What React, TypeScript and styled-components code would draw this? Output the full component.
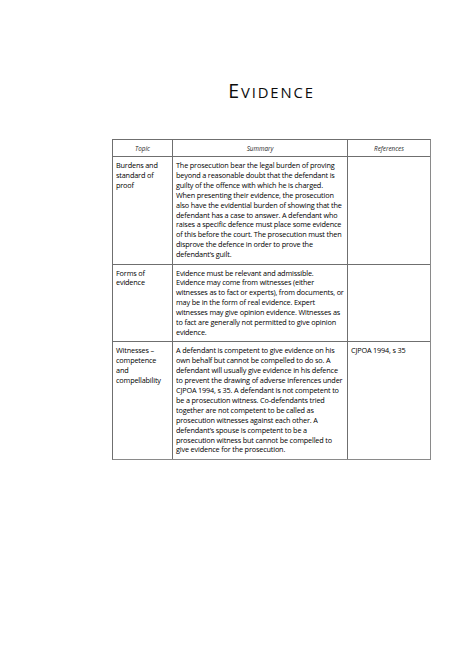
import styled, { createGlobalStyle } from "styled-components";

const GlobalStyle = createGlobalStyle`
  html, body {
    margin: 0;
    padding: 0;
    background: #ffffff;
  }
  body {
    font-family: "Open Sans", "Noto Sans", sans-serif;
    color: #1e1e1e;
  }
`

const Page = styled.div`
  width: 474px;
  height: 670px;
  padding-left: 112px;
  box-sizing: border-box;
`

const Content = styled.div`
  width: 319px;
`

const Title = styled.h1`
  margin: 0;
  padding-top: 79px;
  height: 139px;
  box-sizing: border-box;
  text-align: center;
  font-family: "Open Sans", "Noto Sans", sans-serif;
  font-weight: 400;
  font-size: 19.5px;
  line-height: 24px;
  letter-spacing: 1.9px;
  color: #0c0c0c;
`

const SmallCaps = styled.span`
  font-size: 14.8px;
`

const Table = styled.div`
  display: grid;
  grid-template-columns: 60px 175px 1fr;
  border-top: 1px solid #6f6f6f;
  border-left: 1px solid #6f6f6f;
  border-right: 1.5px solid #8a8a8a;
  border-bottom: 1.5px solid #8a8a8a;
`

const HeadCell = styled.div<{ $last?: boolean }>`
  height: 16px;
  display: flex;
  align-items: center;
  justify-content: center;
  font-style: italic;
  font-size: 6.3px;
  color: #262626;
  border-bottom: 1px solid #6f6f6f;
  border-right: ${(p) => (p.$last ? "none" : "1px solid #6f6f6f")};
`

const Cell = styled.div<{ $last?: boolean; $bottom?: boolean }>`
  padding: 4px 2px 3.5px 3px;
  font-size: 7.3px;
  line-height: 9.9px;
  letter-spacing: -0.17px;
  color: #000000;
  border-bottom: ${(p) => (p.$bottom ? "none" : "1px solid #6f6f6f")};
  border-right: ${(p) => (p.$last ? "none" : "1px solid #6f6f6f")};
`

const Line = styled.span`
  display: block;
  white-space: nowrap;
`

type Row = {
  topic: string[];
  summary: string[];
  refs: string[];
};

const rows: Row[] = [
  {
    topic: ["Burdens and", "standard of", "proof"],
    summary: [
      "The prosecution bear the legal burden of proving",
      "beyond a reasonable doubt that the defendant is",
      "guilty of the offence with which he is charged.",
      "When presenting their evidence, the prosecution",
      "also have the evidential burden of showing that the",
      "defendant has a case to answer. A defendant who",
      "raises a specific defence must place some evidence",
      "of this before the court. The prosecution must then",
      "disprove the defence in order to prove the",
      "defendant\u2019s guilt.",
    ],
    refs: [],
  },
  {
    topic: ["Forms of", "evidence"],
    summary: [
      "Evidence must be relevant and admissible.",
      "Evidence may come from witnesses (either",
      "witnesses as to fact or experts), from documents, or",
      "may be in the form of real evidence. Expert",
      "witnesses may give opinion evidence. Witnesses as",
      "to fact are generally not permitted to give opinion",
      "evidence.",
    ],
    refs: [],
  },
  {
    topic: ["Witnesses \u2013", "competence", "and", "compellability"],
    summary: [
      "A defendant is competent to give evidence on his",
      "own behalf but cannot be compelled to do so. A",
      "defendant will usually give evidence in his defence",
      "to prevent the drawing of adverse inferences under",
      "CJPOA 1994, s 35. A defendant is not competent to",
      "be a prosecution witness. Co-defendants tried",
      "together are not competent to be called as",
      "prosecution witnesses against each other. A",
      "defendant\u2019s spouse is competent to be a",
      "prosecution witness but cannot be compelled to",
      "give evidence for the prosecution.",
    ],
    refs: ["CJPOA 1994, s 35"],
  },
];

const Lines = ({ lines }: { lines: string[] }) => (
  <>
    {lines.map((l, i) => (
      <Line key={i}>{l}</Line>
    ))}
  </>
);

const App = () => {
  return (
    <>
      <GlobalStyle />
      <Page>
        <Content>
          <Title>
            E<SmallCaps>VIDENCE</SmallCaps>
          </Title>
          <Table>
            <HeadCell>Topic</HeadCell>
            <HeadCell>Summary</HeadCell>
            <HeadCell $last>References</HeadCell>
            {rows.map((row, i) => {
              const bottom = i === rows.length - 1;
              return [
                <Cell key={`t${i}`} $bottom={bottom}>
                  <Lines lines={row.topic} />
                </Cell>,
                <Cell key={`s${i}`} $bottom={bottom}>
                  <Lines lines={row.summary} />
                </Cell>,
                <Cell key={`r${i}`} $bottom={bottom} $last>
                  <Lines lines={row.refs} />
                </Cell>,
              ];
            })}
          </Table>
        </Content>
      </Page>
    </>
  );
};

export default App;
